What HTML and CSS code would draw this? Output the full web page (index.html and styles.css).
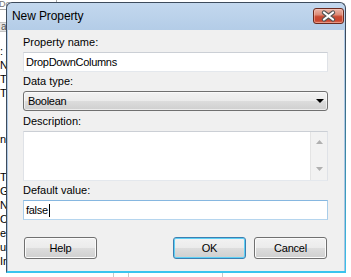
FILE: index.html
```html
<!DOCTYPE html>
<html>
<head>
<meta charset="utf-8">
<title>New Property</title>
<link rel="stylesheet" href="styles.css">
</head>
<body>
<div class="desk">
  <div class="tb">Do</div>
  <div class="tab">a</div>
  <div class="ln">:</div>
  <div class="ln">Nc</div>
  <div class="ln">T</div>
  <div class="ln">T</div>
  <div class="ln"></div>
  <div class="ln"></div>
  <div class="ln low">n</div>
  <div class="ln"></div>
  <div class="ln"></div>
  <div class="ln">T</div>
  <div class="ln">G</div>
  <div class="ln">N</div>
  <div class="ln">O</div>
  <div class="ln">er</div>
  <div class="ln">ue</div>
  <div class="ln">Ir</div>
  <div class="cells"><div class="c1"></div><div class="c2"></div><div class="c3"></div><div class="c4"></div></div>
</div>

<div class="dialog">
  <div class="titlebar">
    <span class="title">New Property</span>
    <div class="close">
      <svg width="29" height="14" viewBox="0 0 29 14">
        <path d="M10 3.5 L19 10.5 M19 3.5 L10 10.5" stroke="#555" stroke-width="4.4" stroke-linecap="round" fill="none"/>
        <path d="M10 3.5 L19 10.5 M19 3.5 L10 10.5" stroke="#fff" stroke-width="2.2" stroke-linecap="round" fill="none"/>
      </svg>
    </div>
  </div>
  <div class="client">
    <div class="lbl">Property name:</div>
    <div class="field">DropDownColumns</div>
    <div class="lbl">Data type:</div>
    <div class="select">
      <span>Boolean</span>
      <svg width="8" height="4" viewBox="0 0 8 4"><path d="M0 0 H8 L4 4 Z" fill="#000"/></svg>
    </div>
    <div class="lbl lbl-desc">Description:</div>
    <div class="ta">
      <div class="sb">
        <svg width="7" height="4" viewBox="0 0 7 4"><path d="M0 4 H7 L3.5 0 Z" fill="#b0b0b0"/></svg>
        <svg width="7" height="4" viewBox="0 0 7 4"><path d="M0 0 H7 L3.5 4 Z" fill="#b0b0b0"/></svg>
      </div>
    </div>
    <div class="lbl">Default value:</div>
    <div class="field focus">false<span class="caret"></span></div>
    <div class="buttons">
      <div class="btn help">Help</div>
      <div class="btn-group">
        <div class="btn default">OK</div>
        <div class="btn">Cancel</div>
      </div>
    </div>
  </div>
</div>
</body>
</html>
```

FILE: styles.css
```css
html, body {
  margin: 0;
  padding: 0;
}
body {
  width: 351px;
  height: 277px;
  overflow: hidden;
  background: #fff;
  position: relative;
  font-family: "Liberation Sans", Arial, sans-serif;
  color: #000;
}

/* background window fragments */
.desk {
  display: flex;
  flex-direction: column;
  font-size: 11px;
}
.tb {
  height: 10px;
  width: 60px;
  margin-left: -3px;
  box-sizing: border-box;
  border: 1px solid #a9a9a9;
  border-top: none;
  font-size: 9px;
  line-height: 8px;
  color: #777;
  padding-left: 1px;
}
.tab {
  margin-top: 12px;
  height: 10px;
  width: 60px;
  margin-left: -3px;
  box-sizing: border-box;
  background: #e4e4e4;
  border: 1px solid #c4c4c4;
  font-size: 10px;
  line-height: 8px;
  color: #555;
  padding-left: 3px;
  margin-bottom: 12px;
}
.ln {
  height: 14px;
  line-height: 14px;
  white-space: nowrap;
}
.ln.low {
  line-height: 22px;
}
.cells {
  display: flex;
  height: 12px;
}
.cells > div {
  box-sizing: border-box;
}
.c1 { width: 113px; }
.c2 { width: 15px; border-left: 1px solid #c8c8c8; }
.c3 { width: 94px; border-left: 1px solid #c8c8c8; }
.c4 { flex: 1; border-left: 1px solid #c8c8c8; }

/* dialog window */
.dialog {
  position: absolute;
  left: 6px;
  top: 2px;
  width: 340px;
  height: 271px;
  box-sizing: border-box;
  border: 1px solid #3d4b5c;
  border-bottom: 2px solid #3bc4ee;
  border-radius: 6px 6px 0 0;
  background: linear-gradient(#c3d8ee, #b3cce7 28px, #a9c4e1);
  display: flex;
  flex-direction: column;
}
.dialog::after {
  content: "";
  position: absolute;
  right: -1px;
  top: 30px;
  bottom: -2px;
  width: 1px;
  background: linear-gradient(#3d4b5c, #3bc4ee);
}
.titlebar {
  flex: none;
  height: 27px;
  display: flex;
  justify-content: space-between;
  align-items: flex-start;
}
.title {
  font-size: 12px;
  line-height: 14px;
  padding: 6px 0 0 5px;
  letter-spacing: -0.1px;
  color: #000;
}
.close {
  width: 31px;
  height: 16px;
  margin: 5px 1px 0 0;
  box-sizing: border-box;
  border: 1px solid #6a2a1e;
  border-radius: 3px;
  background: linear-gradient(#ebb5a8 0%, #dd8c78 40%, #c94b33 55%, #c8452e 80%, #d86c54 100%);
  box-shadow: inset 0 0 0 1px rgba(255, 210, 200, 0.45);
  display: flex;
}
.close svg {
  display: block;
}

.client {
  flex: 1;
  margin: 0 1px;
  background: #f0f0f0;
  padding: 6px 16px 0 15px;
  display: flex;
  flex-direction: column;
}
.lbl {
  font-size: 11px;
  line-height: 13px;
  height: 13px;
  white-space: nowrap;
}
.field, .select, .ta {
  margin-top: 3px;
}
.field + .lbl, .ta + .lbl {
  margin-top: 3px;
}
.lbl-desc {
  margin-top: 4px;
}
.field {
  height: 20px;
  box-sizing: border-box;
  border: 1px solid;
  border-color: #cbcfd5 #dfe2e7 #e4e8ed #dfe2e7;
  background: #fff;
  padding: 0 2px;
  font-size: 11px;
  line-height: 18px;
  letter-spacing: -0.3px;
  white-space: nowrap;
}
.field.focus {
  border-color: #86b7e0 #a9cde9 #b5d5ee #a9cde9;
}
.caret {
  display: inline-block;
  width: 1px;
  height: 13px;
  background: #000;
  vertical-align: -3px;
  margin-left: 1px;
}
.select {
  height: 20px;
  box-sizing: border-box;
  border: 1px solid #707070;
  border-radius: 3px;
  background: linear-gradient(#f2f2f2, #ebebeb 50%, #dddddd 50%, #cfcfcf);
  box-shadow: inset 0 0 0 1px rgba(255, 255, 255, 0.6);
  display: flex;
  align-items: center;
  justify-content: space-between;
  padding: 0 3px 0 4px;
  font-size: 11px;
  letter-spacing: -0.3px;
}
.select svg {
  display: block;
}
.ta {
  height: 50px;
  box-sizing: border-box;
  border: 1px solid;
  border-color: #cbcfd5 #dfe2e7 #e4e8ed #dfe2e7;
  background: #fff;
  display: flex;
  justify-content: flex-end;
}
.sb {
  width: 17px;
  box-sizing: border-box;
  background: #f2f2f2;
  border-left: 1px solid #e4e4e4;
  display: flex;
  flex-direction: column;
  justify-content: space-between;
  align-items: center;
  padding: 8px 0 9px;
}
.sb svg {
  display: block;
}
.buttons {
  margin-top: 17px;
  display: flex;
  justify-content: space-between;
}
.btn-group {
  display: flex;
  gap: 8px;
  margin-right: 1px;
}
.btn {
  width: 73px;
  height: 22px;
  box-sizing: border-box;
  border: 1px solid #707070;
  border-radius: 3px;
  background: linear-gradient(#f2f2f2, #ebebeb 50%, #dddddd 50%, #cfcfcf);
  box-shadow: inset 0 0 0 1px #fbfbfb;
  display: flex;
  align-items: center;
  justify-content: center;
  font-size: 11px;
  letter-spacing: -0.2px;
}
.btn.help {
  margin-left: 1px;
}
.btn.default {
  border-color: #3c7fb1;
  box-shadow: inset 0 0 0 1px #5fd0f5;
}
```
